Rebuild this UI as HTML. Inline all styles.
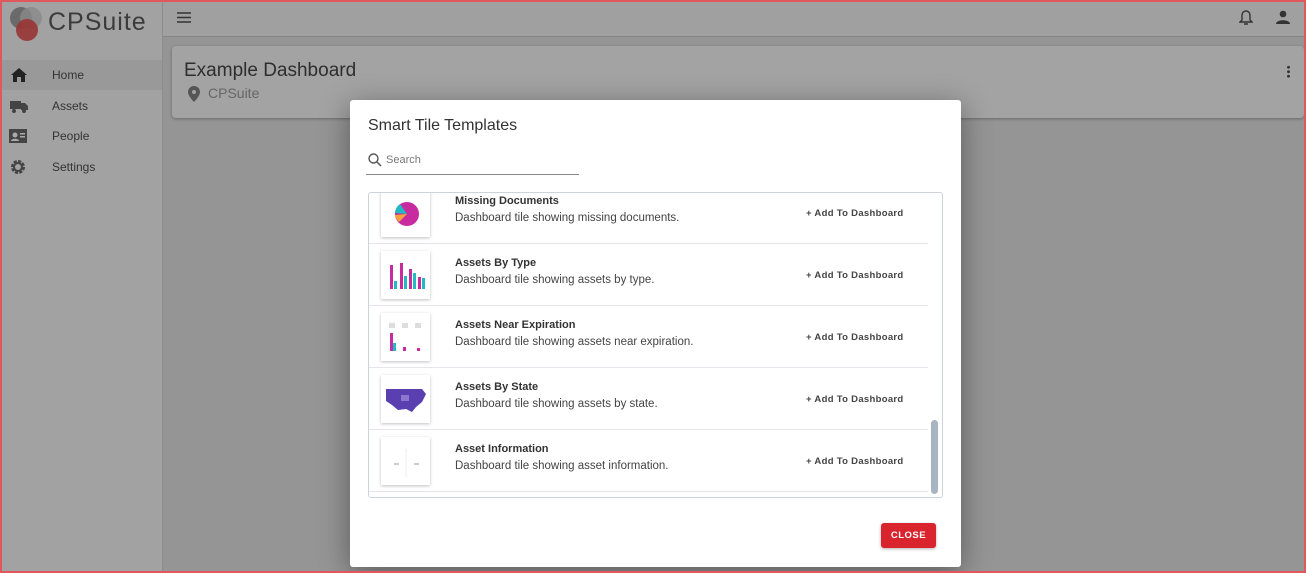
<!DOCTYPE html><html><head><style>
*{box-sizing:border-box;margin:0;padding:0}
body{width:1306px;height:573px;overflow:hidden;font-family:"Liberation Sans",sans-serif;background:#959595;position:relative}
.frame{position:absolute;inset:0;border:2px solid #e0575c;z-index:50;pointer-events:none}
.side{position:absolute;left:0;top:0;width:163px;height:573px;background:#a2a2a2;border-right:1px solid #8c8c8c}
.top{position:absolute;left:163px;top:0;right:0;height:37px;background:#a0a0a0;border-bottom:1px solid #858585}
.nav{position:absolute;left:0;width:162px;height:30px;font-size:12px;color:#333;line-height:30px}
.nav span{position:absolute;left:52px}
.card{position:absolute;left:172px;top:46px;width:1132px;height:72px;background:#a3a3a3;border-radius:4px;box-shadow:0 1px 3px rgba(0,0,0,.3)}
.modal{position:absolute;left:350px;top:100px;width:611px;height:467px;background:#fff;border-radius:3px;box-shadow:0 6px 30px rgba(0,0,0,.4)}
.list{position:absolute;left:18px;top:92px;width:575px;height:306px;border:1px solid #cdd3da;border-radius:3px;overflow:hidden}
.row{position:absolute;left:0;width:559px;height:62px;border-bottom:1px solid #e3e6ea}
.thumb{position:absolute;left:12px;top:7px;width:49px;height:48px;background:#fff;box-shadow:0 1px 3px rgba(0,0,0,.25)}
.t1{position:absolute;left:86px;top:13px;font-size:11px;font-weight:bold;color:#333}
.t2{position:absolute;left:86px;top:30px;font-size:11.5px;color:#444}
.add{position:absolute;left:437px;top:26px;font-size:9.5px;font-weight:bold;color:#444;letter-spacing:.3px}
</style></head><body>
<div class="frame"></div>
<div class="side">
 <svg style="position:absolute;left:8px;top:5px" width="40" height="38"><circle cx="13" cy="13" r="11" fill="#6a6a6a"/><circle cx="23" cy="13" r="11" fill="#8a8a8a" opacity=".8"/><circle cx="19" cy="25" r="11" fill="#983434" opacity=".9"/></svg>
 <div style="position:absolute;left:48px;top:8px;font-size:25px;color:#3c3c3c;letter-spacing:1px">CPSuite</div>
 <div class="nav" style="top:60px;background:#999"><svg style="position:absolute;left:11px;top:8px" width="16" height="14"><path d="M8 0L0 7h2v7h4V9h4v5h4V7h2z" fill="#222"/></svg><span>Home</span></div>
 <div class="nav" style="top:91px"><svg style="position:absolute;left:10px;top:9px" width="18" height="13"><rect x="0" y="1" width="11" height="8" fill="#444"/><path d="M11 3h4l3 3v4h-7z" fill="#444"/><circle cx="4" cy="11" r="2" fill="#444"/><circle cx="14" cy="11" r="2" fill="#444"/></svg><span>Assets</span></div>
 <div class="nav" style="top:121px"><svg style="position:absolute;left:9px;top:8px" width="18" height="14"><rect width="18" height="14" fill="#444"/><circle cx="6" cy="6" r="2.5" fill="#aaa"/><path d="M2 12c0-3 8-3 8 0z" fill="#aaa"/><rect x="11" y="4" width="5" height="1.5" fill="#aaa"/><rect x="11" y="7" width="5" height="1.5" fill="#aaa"/></svg><span>People</span></div>
 <div class="nav" style="top:152px"><svg style="position:absolute;left:10px;top:7px" width="16" height="16"><circle cx="8" cy="8" r="5.5" fill="none" stroke="#444" stroke-width="3" stroke-dasharray="3 1.3"/><circle cx="8" cy="8" r="4" fill="none" stroke="#444" stroke-width="2"/></svg><span>Settings</span></div>
</div>
<div class="top">
 <svg style="position:absolute;left:14px;top:12px" width="14" height="11"><path d="M0 1h14M0 5.5h14M0 10h14" stroke="#333" stroke-width="1.6"/></svg>
 <svg style="position:absolute;left:1076px;top:10px" width="14" height="16"><path d="M7 1a4 4 0 0 0-4 4v5l-2 2h12l-2-2V5a4 4 0 0 0-4-4z" fill="none" stroke="#333" stroke-width="1.4"/><path d="M5 14h4" stroke="#333" stroke-width="1.5"/></svg>
 <svg style="position:absolute;left:1113px;top:10px" width="14" height="14"><circle cx="7" cy="4" r="3.3" fill="#333"/><path d="M0 14c0-5 14-5 14 0z" fill="#333"/></svg>
</div>
<div class="card">
 <div style="position:absolute;left:12px;top:14px;font-size:19px;color:#2e2e2e">Example Dashboard</div>
 <svg style="position:absolute;left:16px;top:40px" width="12" height="16"><path d="M6 0a6 6 0 0 0-6 6c0 4 6 10 6 10s6-6 6-10a6 6 0 0 0-6-6z" fill="#555"/><circle cx="6" cy="6" r="2" fill="#a3a3a3"/></svg>
 <div style="position:absolute;left:36px;top:39px;font-size:14px;color:#666">CPSuite</div>
 <div style="position:absolute;right:14px;top:19px;width:3px;height:13px;background:radial-gradient(circle,#333 1.3px,transparent 1.6px) 0 0/3px 4.5px"></div>
</div>
<div class="modal">
 <div style="position:absolute;left:18px;top:17px;font-size:16px;color:#333">Smart Tile Templates</div>
 <div style="position:absolute;left:16px;top:50px;width:213px;height:25px;border-bottom:1px solid #888">
  <svg style="position:absolute;left:2px;top:3px" width="14" height="14"><circle cx="5.5" cy="5.5" r="4.5" fill="none" stroke="#555" stroke-width="1.4"/><path d="M9 9l4 4" stroke="#555" stroke-width="1.5"/></svg>
  <div style="position:absolute;left:20px;top:4px;font-size:11px;color:#777">Search</div>
 </div>
 <div class="list">
  <div class="row" style="top:-11px"><div class="thumb"><svg width="49" height="48"><circle cx="26" cy="25" r="12" fill="#c82aa0"/><path d="M26 25L14 24a12 12 0 0 1 5-9z" fill="#22b8c4"/><path d="M26 25L14 26a12 12 0 0 0 4 7z" fill="#f7a13a"/></svg></div><div class="t1">Missing Documents</div><div class="t2">Dashboard tile showing missing documents.</div><div class="add">+ Add To Dashboard</div></div>
  <div class="row" style="top:51px"><div class="thumb"><svg width="49" height="48"><g fill="#c82aa0"><rect x="9" y="14" width="3" height="24"/><rect x="19" y="12" width="3" height="26"/><rect x="28" y="18" width="3" height="20"/><rect x="37" y="26" width="3" height="12"/></g><g fill="#22b8c4"><rect x="13" y="30" width="3" height="8"/><rect x="23" y="25" width="3" height="13"/><rect x="32" y="22" width="3" height="16"/><rect x="41" y="27" width="3" height="11"/></g></svg></div><div class="t1">Assets By Type</div><div class="t2">Dashboard tile showing assets by type.</div><div class="add">+ Add To Dashboard</div></div>
  <div class="row" style="top:113px"><div class="thumb"><svg width="49" height="48"><g fill="#ddd"><rect x="8" y="10" width="6" height="5"/><rect x="21" y="10" width="6" height="5"/><rect x="34" y="10" width="6" height="5"/></g><rect x="9" y="20" width="3" height="18" fill="#c82aa0"/><rect x="12" y="30" width="3" height="8" fill="#22b8c4"/><rect x="22" y="34" width="3" height="4" fill="#c82aa0"/><rect x="36" y="35" width="3" height="3" fill="#c82aa0"/></svg></div><div class="t1">Assets Near Expiration</div><div class="t2">Dashboard tile showing assets near expiration.</div><div class="add">+ Add To Dashboard</div></div>
  <div class="row" style="top:175px"><div class="thumb"><svg width="49" height="48"><path d="M5 14h36l4 5-4 8-6 5-4 5-6-3-8 1-6-5-6-4z" fill="#5a3fb0"/><path d="M20 20h8v6h-8z" fill="#8a78d0"/></svg></div><div class="t1">Assets By State</div><div class="t2">Dashboard tile showing assets by state.</div><div class="add">+ Add To Dashboard</div></div>
  <div class="row" style="top:237px"><div class="thumb"><svg width="49" height="48"><path d="M25 12v28" stroke="#eee"/><rect x="13" y="26" width="5" height="2" fill="#ccc"/><rect x="33" y="26" width="5" height="2" fill="#ccc"/></svg></div><div class="t1">Asset Information</div><div class="t2">Dashboard tile showing asset information.</div><div class="add">+ Add To Dashboard</div></div>
  <div style="position:absolute;left:562px;top:227px;width:7px;height:74px;background:#a9b4c2;border-radius:4px"></div>
 </div>
 <div style="position:absolute;left:531px;top:423px;width:55px;height:25px;background:#d9232d;border-radius:3px;color:#fff;font-size:9.5px;font-weight:bold;text-align:center;line-height:25px;letter-spacing:.5px;box-shadow:0 1px 3px rgba(0,0,0,.3)">CLOSE</div>
</div>
</body></html>
